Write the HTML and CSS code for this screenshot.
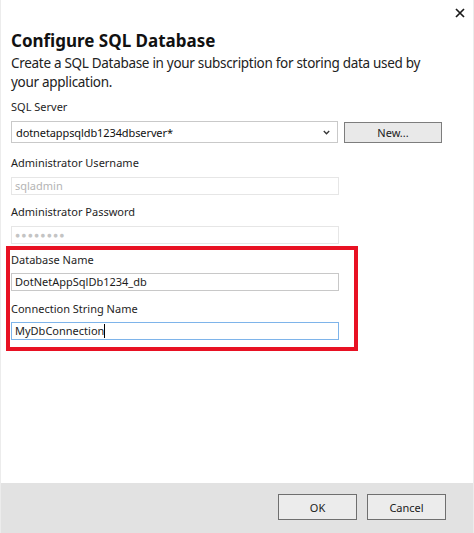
FILE: index.html
```html
<!DOCTYPE html>
<html>
<head>
<meta charset="utf-8">
<link rel="stylesheet" href="styles.css">
</head>
<body>
<div class="dialog">
  <div class="titlebar">
    <span class="close" aria-label="Close">
      <svg width="10" height="10" viewBox="0 0 10 10"><path d="M1 1 L9 9 M9 1 L1 9" stroke="#1a1a1a" stroke-width="1.7" fill="none"/></svg>
    </span>
  </div>
  <div class="content">
    <h1 class="title">Configure SQL Database</h1>
    <p class="subtitle">Create a SQL Database in your subscription for storing data used by your application.</p>

    <div class="label first">SQL Server</div>
    <div class="server-row">
      <div class="select">
        <span class="select-text">dotnetappsqldb1234dbserver*</span>
        <svg class="chev" width="7" height="5" viewBox="0 0 7 5"><path d="M0.8 1 L3.5 3.8 L6.2 1" stroke="#333" stroke-width="1.3" fill="none"/></svg>
      </div>
      <div class="btn new">New...</div>
    </div>

    <div class="label gap">Administrator Username</div>
    <div class="input disabled">sqladmin</div>

    <div class="label gap2">Administrator Password</div>
    <div class="input disabled dots">&#9679;&#9679;&#9679;&#9679;&#9679;&#9679;&#9679;&#9679;</div>

    <div class="highlight">
      <div class="label">Database Name</div>
      <div class="input tight">DotNetAppSqlDb1234_db</div>
      <div class="label gap3">Connection String Name</div>
      <div class="input tight focused">MyDbConnection<span class="caret"></span></div>
    </div>
  </div>
  <div class="footer">
    <div class="btn action">OK</div>
    <div class="btn action">Cancel</div>
  </div>
</div>
</body>
</html>
```
FILE: styles.css
```css
html, body {
  margin: 0;
  padding: 0;
  background: #ffffff;
}
body {
  font-family: "Noto Sans", "Open Sans", sans-serif;
  color: #1b1b1b;
}
.dialog {
  width: 474px;
  height: 533px;
  box-sizing: border-box;
  border-left: 1px solid #ececec;
  border-right: 1px solid #ececec;
  display: flex;
  flex-direction: column;
}
.titlebar {
  height: 26px;
  display: flex;
  justify-content: flex-end;
  align-items: center;
  padding-right: 8px;
}
.close {
  display: flex;
  width: 10px;
  height: 10px;
}
.content {
  flex: 1;
  padding-left: 10px;
}
.title {
  margin: 2px 0 0 0;
  font-size: 17px;
  line-height: 26px;
  font-weight: 700;
  color: #111;
}
.subtitle {
  margin: 0;
  font-size: 13.5px;
  letter-spacing: -0.3px;
  line-height: 19px;
  width: 440px;
  color: #222;
}
.label {
  font-size: 11px;
  line-height: 16px;
  color: #1e1e1e;
}
.label.first { margin-top: 7px; }
.label.gap { margin-top: 12px; }
.label.gap2 { margin-top: 9px; }
.label.gap3 { margin-top: 10px; }
.server-row {
  display: flex;
  margin-top: 6px;
  align-items: center;
}
.select {
  width: 327px;
  height: 22px;
  box-sizing: border-box;
  border: 1px solid #c9c9c9;
  display: flex;
  align-items: center;
  justify-content: space-between;
  padding: 0 7px 0 4px;
  font-size: 11px;
  letter-spacing: -0.1px;
  color: #111;
}
.chev { margin-top: 1px; }
.btn {
  box-sizing: border-box;
  background: #e9e9e9;
  border: 1px solid #7d7d7d;
  display: flex;
  align-items: center;
  justify-content: center;
  font-size: 11px;
  color: #1b1b1b;
}
.btn.new {
  width: 98px;
  height: 21px;
  margin-left: 6px;
}
.input {
  width: 328px;
  height: 18px;
  box-sizing: border-box;
  border: 1px solid #c8c8c8;
  margin-top: 6px;
  padding-left: 3px;
  font-size: 11px;
  line-height: 16px;
  display: flex;
  align-items: center;
  background: #fff;
}
.input.disabled {
  border-color: #e6e6e6;
  color: #b4b4b4;
}
.input.dots {
  font-size: 8.5px;
  letter-spacing: 1.2px;
  color: #c4c4c4;
}
.input.tight { margin-top: 5px; }
.input.focused { border-color: #7eb4ea; }
.caret {
  display: inline-block;
  width: 1px;
  height: 14px;
  background: #000;
}
.highlight {
  margin: 2px 0 0 -5px;
  width: 352px;
  box-sizing: border-box;
  border: 4px solid #e81123;
  padding: 2px 0 7px 1px;
}
.footer {
  height: 50px;
  background: #e2e2e2;
  display: flex;
  justify-content: flex-end;
  align-items: flex-start;
  gap: 10px;
  padding: 11px 27px 0 0;
  box-sizing: border-box;
}
.btn.action {
  width: 79px;
  height: 26px;
  background: #ececec;
  border-color: #6f6f6f;
}
```
